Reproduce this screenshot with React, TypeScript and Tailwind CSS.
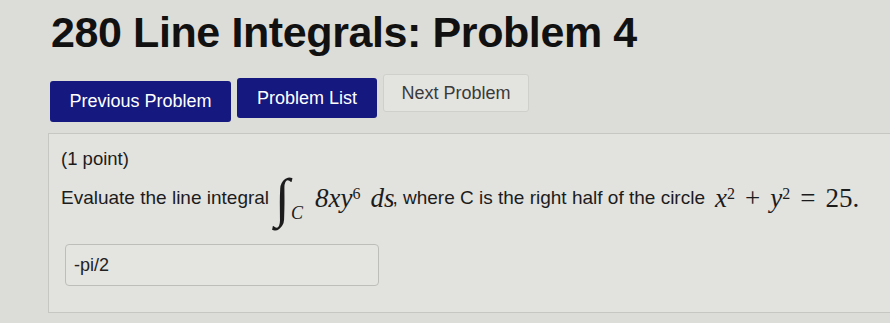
import React from "react";

const App = () => {
  return (
    <div className="w-[890px] h-[323px] overflow-hidden bg-[#dcdcd8] font-['Liberation_Sans',Arial,sans-serif] text-[#1c1c1c]">
      <div className="pl-[51px] pt-[9px]">
        <h1 className="text-[43px] font-bold leading-[47px] tracking-[-0.4px] text-[#111]">
          280 Line Integrals: Problem 4
        </h1>
      </div>

      {/* nav buttons */}
      <div className="flex items-start gap-[6px] pl-[50px] mt-[25px]">
        <button className="h-[41px] w-[181px] rounded-[3px] bg-[#15197f] text-[18px] text-white">
          Previous Problem
        </button>
        <button className="-mt-[3px] h-[40px] w-[140px] rounded-[3px] bg-[#15197f] text-[18px] text-white">
          Problem List
        </button>
        <button className="-mt-[7px] h-[38px] w-[146px] rounded-[3px] border border-[#cfcfcb] bg-[#e3e3e0] text-[18px] text-[#3a3a3a]">
          Next Problem
        </button>
      </div>

      {/* problem box */}
      <div className="ml-[48px] mt-[11px] h-[180px] border border-[#c6c6c2] border-r-0 bg-[#e2e2df] pl-[12px] pt-[14px]">
        <p className="text-[18.5px] leading-[22px]">(1 point)</p>
        <div className="-mt-[3px] flex items-center text-[19px]">
          <span>Evaluate the line integral</span>
          <span className="ml-[6px] flex items-end font-['Liberation_Serif',serif]">
            <span className="text-[54px] leading-[62px] italic">∫</span>
            <span className="mb-[2px] ml-[1px] text-[18px] italic">C</span>
          </span>
          <span className="ml-[12px] font-['Liberation_Serif',serif] text-[27px] italic">
            8xy<sup className="not-italic text-[16px]">6</sup>
            <span className="ml-[10px]">ds</span>
          </span>
          <span className="-ml-[2px]">, where C is the right half of the circle</span>
          <span className="ml-[10px] font-['Liberation_Serif',serif] text-[27px]">
            <i>x</i>
            <sup className="text-[16px]">2</sup>
            <span className="mx-[10px]">+</span>
            <i>y</i>
            <sup className="text-[16px]">2</sup>
            <span className="mx-[10px]">=</span>25.
          </span>
        </div>
        <div className="mt-[15px] ml-[4px] flex h-[42px] w-[314px] items-center rounded-[4px] border border-[#bdbdb9] bg-[#e4e4e1] pl-[8px] text-[18px] text-[#222]">
          -pi/2
        </div>
      </div>
    </div>
  );
};

export default App;
